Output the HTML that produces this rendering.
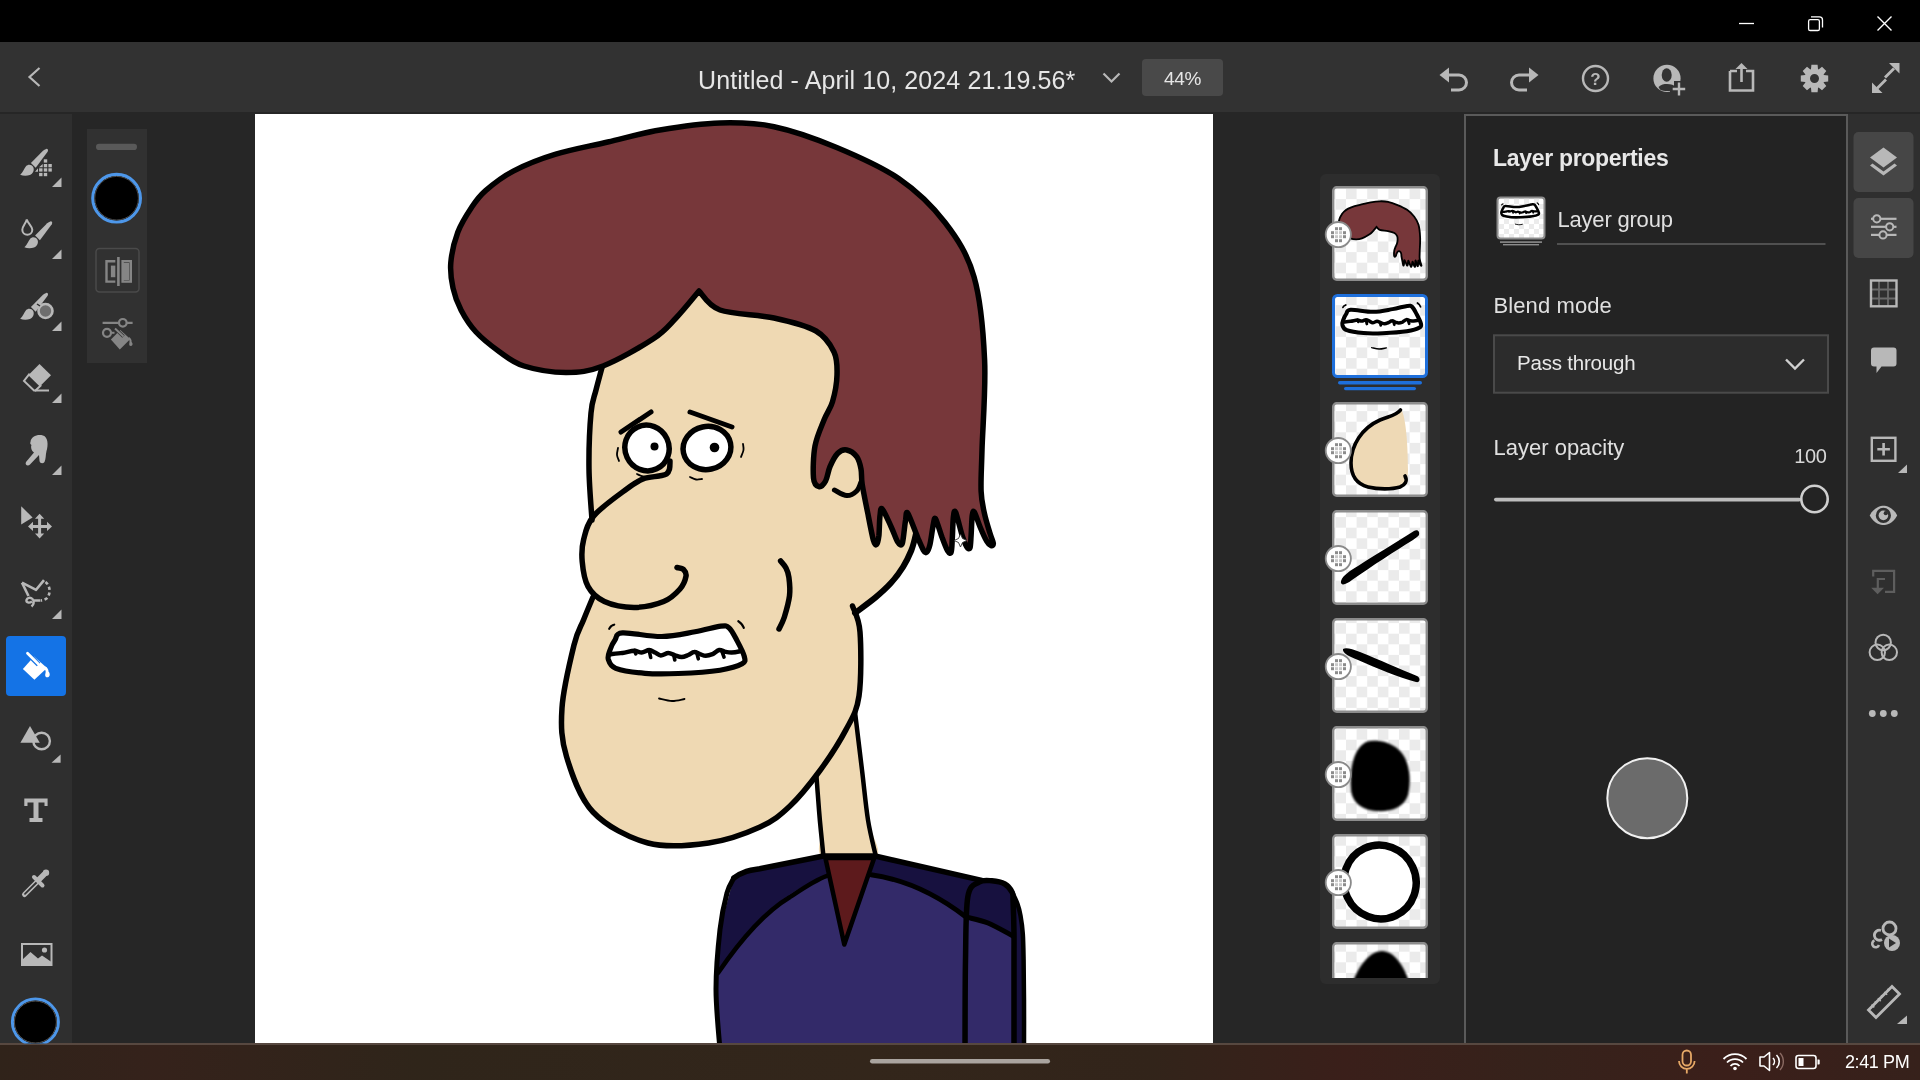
<!DOCTYPE html>
<html><head><meta charset="utf-8">
<style>
*{margin:0;padding:0;box-sizing:border-box}
html,body{width:1920px;height:1080px;overflow:hidden;background:#262626;font-family:"Liberation Sans",sans-serif;color:#ddd}
.abs{position:absolute}
svg.abs{will-change:transform}
#titlebar{left:0;top:0;width:1920px;height:42px;background:#000}
#topbar{left:0;top:42px;width:1920px;height:70px;background:#323232}
#topgap{left:0;top:112px;width:1920px;height:2px;background:#262626}
#lefttb{left:0;top:114px;width:72px;height:929px;background:#2f2f2f}
#sec{left:87px;top:129px;width:60px;height:234px;background:#313131}
#canvas{left:255px;top:114px;width:958px;height:929px;background:#fff}
#layers{left:1320px;top:174px;width:120px;height:810px;background:#2d2d2d;border-radius:6px}
#props{left:1464px;top:114px;width:384px;height:929px;background:#232323;border:2px solid #5a5a5a;border-bottom:none}
#righttb{left:1848px;top:114px;width:72px;height:929px;background:#2f2f2f}
#taskbar{left:0;top:1043px;width:1920px;height:37px;background:linear-gradient(90deg,#30231a 0%,#35221b 8%,#2f251a 22%,#33261b 45%,#32241a 60%,#3a1f1a 70%,#36221b 80%,#3b1f1a 90%,#36211b 100%);border-top:2px solid #574840}
</style></head><body>
<div id="titlebar" class="abs"></div>
<div id="topbar" class="abs"></div>
<div id="topgap" class="abs"></div>
<div id="lefttb" class="abs"></div>
<div id="sec" class="abs"></div>
<div id="canvas" class="abs"></div>
<!--DRAW-->
<svg class="abs" style="left:0;top:0" width="1920" height="1080" viewBox="0 0 1920 1080"><defs><clipPath id="cv"><rect x="255" y="114" width="958" height="929"/></clipPath></defs><g clip-path="url(#cv)"><path d="M816.0,770.0 C812.5,788.3 818.2,799.7 819.0,810.0 C819.8,820.3 820.2,824.2 821.0,832.0 C821.8,839.8 814.3,852.8 823.5,857.0 C832.7,861.2 868.6,863.2 876.0,857.0 C883.4,850.8 870.3,834.5 868.0,820.0 C865.7,805.5 864.2,788.0 862.0,770.0 C859.8,752.0 858.7,723.7 855.0,712.0 C851.3,700.3 846.5,690.3 840.0,700.0 C833.5,709.7 819.5,751.7 816.0,770.0 Z" fill="#efd9b3" />
<path d="M816.0,770.0 C816.5,776.7 818.2,799.7 819.0,810.0 C819.8,820.3 820.2,824.2 821.0,832.0 C821.8,839.8 823.1,852.8 823.5,857.0" fill="none" stroke="#000" stroke-width="4.5" stroke-linecap="round" stroke-linejoin="round" />
<path d="M855.0,712.0 C856.2,721.7 859.8,752.0 862.0,770.0 C864.2,788.0 865.7,805.5 868.0,820.0 C870.3,834.5 874.7,850.8 876.0,857.0" fill="none" stroke="#000" stroke-width="4.5" stroke-linecap="round" stroke-linejoin="round" />
<path d="M610.0,350.0 C594.0,361.7 606.3,353.3 604.0,360.0 C601.7,366.7 598.2,381.2 596.0,390.0 C593.8,398.8 592.2,399.8 591.0,413.0 C589.8,426.2 588.8,451.5 589.0,469.0 C589.2,486.5 593.3,503.2 592.0,518.0 C590.7,532.8 580.8,544.7 581.0,558.0 C581.2,571.3 592.5,587.7 593.0,598.0 C593.5,608.3 587.7,611.7 584.0,620.0 C580.3,628.3 574.7,633.3 571.0,648.0 C567.3,662.7 562.8,689.9 562.0,708.0 C561.2,726.1 561.3,739.2 566.5,756.5 C571.7,773.8 579.4,797.6 593.0,812.0 C606.6,826.4 628.7,837.8 648.0,843.0 C667.3,848.2 689.9,845.7 708.6,843.0 C727.3,840.3 746.4,833.2 760.0,827.0 C773.6,820.8 780.1,815.3 790.0,806.0 C799.9,796.7 810.3,783.6 819.6,771.0 C828.9,758.4 839.0,742.9 845.6,730.4 C852.2,717.9 856.6,712.4 859.0,696.0 C861.4,679.6 860.7,645.8 860.0,632.0 C859.3,618.2 852.4,618.8 855.0,613.0 C857.6,607.2 869.6,602.4 875.6,597.4 C881.6,592.4 886.3,588.2 890.9,583.1 C895.5,578.0 899.7,572.2 903.1,566.8 C906.5,561.4 909.2,555.6 911.3,550.5 C913.3,545.4 907.3,548.0 915.4,536.3 C923.5,524.5 952.6,511.1 960.0,480.0 C967.4,448.9 980.0,376.7 960.0,350.0 C940.0,323.3 883.3,330.0 840.0,320.0 C796.7,310.0 738.3,285.0 700.0,290.0 C661.7,295.0 626.0,338.3 610.0,350.0 Z" fill="#efd9b3" />
<path d="M604.0,360.0 C602.7,365.0 598.2,381.2 596.0,390.0 C593.8,398.8 592.2,399.8 591.0,413.0 C589.8,426.2 588.8,451.2 589.0,469.0 C589.2,486.8 591.5,511.5 592.0,520.0" fill="none" stroke="#000" stroke-width="5.5" stroke-linecap="round" stroke-linejoin="round" />
<path d="M593.0,597.0 C591.4,600.8 586.7,612.0 583.5,620.0 C580.3,628.0 577.6,630.3 574.0,645.0 C570.4,659.7 563.2,689.4 562.0,708.0 C560.8,726.6 561.3,739.2 566.5,756.5 C571.7,773.8 579.4,797.6 593.0,812.0 C606.6,826.4 628.7,837.8 648.0,843.0 C667.3,848.2 689.9,845.7 708.6,843.0 C727.3,840.3 746.4,833.2 760.0,827.0 C773.6,820.8 780.1,815.3 790.0,806.0 C799.9,796.7 810.3,783.6 819.6,771.0 C828.9,758.4 839.0,742.9 845.6,730.4 C852.2,717.9 856.6,712.4 859.0,696.0 C861.4,679.6 861.1,647.0 860.0,632.0 C858.9,617.0 853.8,610.3 852.5,606.0" fill="none" stroke="#000" stroke-width="5.5" stroke-linecap="round" stroke-linejoin="round" />
<path d="M855.0,613.0 C858.4,610.4 869.6,602.4 875.6,597.4 C881.6,592.4 886.3,588.2 890.9,583.1 C895.5,578.0 899.7,572.2 903.1,566.8 C906.5,561.4 909.2,555.6 911.3,550.5 C913.3,545.4 914.5,539.7 915.4,536.3 C916.3,532.9 916.3,531.0 916.5,530.0" fill="none" stroke="#000" stroke-width="6" stroke-linecap="round" stroke-linejoin="round" />
<path d="M670.0,461.0 C669.9,462.3 670.1,466.8 669.5,469.0 C668.9,471.2 668.2,472.8 666.5,474.0 C664.8,475.2 662.9,475.2 659.0,476.0 C655.1,476.8 648.4,476.8 643.0,479.0 C637.6,481.2 634.9,482.9 626.7,489.0 C618.5,495.1 601.2,507.2 594.0,515.6 C586.8,524.0 585.7,531.6 583.7,539.3 C581.7,546.9 581.5,553.6 582.2,561.5 C582.9,569.4 584.4,580.0 588.1,586.7 C591.8,593.4 596.8,598.0 604.4,601.5 C612.0,605.0 624.1,607.4 634.0,607.4 C643.9,607.4 656.0,604.6 663.7,601.5 C671.4,598.4 676.3,593.2 680.0,589.0 C683.7,584.8 685.4,579.5 686.0,576.3 C686.6,573.0 685.0,571.0 683.5,569.5 C682.0,568.0 678.1,567.8 677.0,567.5" fill="none" stroke="#000" stroke-width="5.5" stroke-linecap="round" stroke-linejoin="round" />
<path d="M780.6,561.0 C781.5,562.2 784.6,565.3 786.0,568.0 C787.4,570.7 788.3,572.8 788.9,577.4 C789.5,582.0 790.3,589.3 789.5,595.9 C788.7,602.5 786.0,611.7 784.3,617.2 C782.5,622.7 779.9,627.0 779.0,629.0" fill="none" stroke="#000" stroke-width="5.5" stroke-linecap="round" stroke-linejoin="round" />
<ellipse cx="647" cy="448" rx="22" ry="23" fill="#fff" stroke="#000" stroke-width="5.5" transform="rotate(-25 647 448)"/>
<ellipse cx="707" cy="448" rx="24" ry="21.5" fill="#fff" stroke="#000" stroke-width="5.5" transform="rotate(-12 707 448)"/>
<circle cx="654.5" cy="446.5" r="4" fill="#000"/>
<circle cx="714.5" cy="447.5" r="4.8" fill="#000"/>
<path d="M621,432 L651,412" fill="none" stroke="#000" stroke-width="5" stroke-linecap="round" stroke-linejoin="round" />
<path d="M690,412 L732,427" fill="none" stroke="#000" stroke-width="5" stroke-linecap="round" stroke-linejoin="round" />
<path d="M618.0,448.0 C617.8,449.2 616.8,452.8 617.0,455.0 C617.2,457.2 618.7,460.0 619.0,461.0" fill="none" stroke="#000" stroke-width="1.8" stroke-linecap="round" stroke-linejoin="round" />
<path d="M743.0,444.0 C743.1,445.0 743.8,447.8 743.5,450.0 C743.2,452.2 741.4,455.8 741.0,457.0" fill="none" stroke="#000" stroke-width="1.8" stroke-linecap="round" stroke-linejoin="round" />
<path d="M637.0,474.0 C638.0,474.4 640.8,476.1 643.0,476.5 C645.2,476.9 648.8,476.5 650.0,476.5" fill="none" stroke="#000" stroke-width="1.8" stroke-linecap="round" stroke-linejoin="round" />
<path d="M690.0,477.0 C691.0,477.4 694.0,479.2 696.0,479.5 C698.0,479.8 701.0,479.1 702.0,479.0" fill="none" stroke="#000" stroke-width="1.8" stroke-linecap="round" stroke-linejoin="round" />
<path d="M622.5,632.9 C630.3,632.3 649.6,636.7 661.7,636.5 C673.8,636.3 685.1,633.5 695.0,631.8 C704.9,630.1 715.1,626.9 720.8,626.2 C726.5,625.6 726.5,625.6 729.2,627.9 C731.8,630.2 734.2,635.3 736.7,640.0 C739.2,644.7 743.3,652.3 744.2,656.2 C745.1,660.2 746.1,661.4 742.1,663.8 C738.1,666.1 730.6,668.5 720.0,670.2 C709.4,671.8 690.8,673.0 678.3,673.5 C665.8,674.0 655.4,674.2 645.0,673.3 C634.6,672.5 621.9,670.7 615.8,668.3 C609.7,666.0 609.3,662.2 608.3,659.2 C607.4,656.1 608.9,653.2 610.0,650.0 C611.1,646.8 612.9,642.8 615.0,640.0 C617.1,637.2 614.7,633.5 622.5,632.9 Z" fill="#fff" stroke="#000" stroke-width="5.2" stroke-linecap="round" stroke-linejoin="round" />
<path d="M610.8,654.2 C612.8,654.0 618.6,653.5 622.5,652.9 C626.4,652.4 631.0,650.9 634.2,650.8 C637.4,650.8 639.2,652.6 641.7,652.5 C644.2,652.4 646.9,650.0 649.2,650.0 C651.4,650.0 653.1,651.6 655.0,652.5 C656.9,653.4 658.6,655.3 660.8,655.4 C663.1,655.5 666.0,652.9 668.3,652.9 C670.7,652.9 672.8,654.7 675.0,655.4 C677.2,656.1 679.4,657.2 681.7,657.1 C683.9,657.0 686.2,655.8 688.3,655.0 C690.4,654.2 692.2,652.2 694.2,652.1 C696.1,651.9 698.1,653.5 700.0,654.2 C701.9,654.8 703.8,655.8 705.8,655.8 C707.9,655.8 710.3,655.1 712.5,654.2 C714.7,653.2 717.1,650.4 719.2,650.0 C721.2,649.6 722.9,651.2 725.0,651.7 C727.1,652.1 729.2,652.6 731.7,652.5 C734.2,652.4 738.6,651.5 740.0,651.2" fill="none" stroke="#000" stroke-width="4.5" stroke-linecap="round" stroke-linejoin="round" />
<path d="M634.6,650.4 L635.8,653.8" fill="none" stroke="#000" stroke-width="3.6" stroke-linecap="round" stroke-linejoin="round" />
<path d="M649.3,650.8 L650.7,657.5" fill="none" stroke="#000" stroke-width="3.6" stroke-linecap="round" stroke-linejoin="round" />
<path d="M673.8,655.4 L674.8,660.0" fill="none" stroke="#000" stroke-width="3.6" stroke-linecap="round" stroke-linejoin="round" />
<path d="M696.8,652.9 L698.3,658.8" fill="none" stroke="#000" stroke-width="3.6" stroke-linecap="round" stroke-linejoin="round" />
<path d="M721.8,650.8 L724.0,657.1" fill="none" stroke="#000" stroke-width="3.6" stroke-linecap="round" stroke-linejoin="round" />
<path d="M609.2,628.8 C609.5,628.3 610.4,626.9 611.2,626.2 C612.1,625.6 613.7,624.9 614.2,624.6" fill="none" stroke="#000" stroke-width="2.2" stroke-linecap="round" stroke-linejoin="round" />
<path d="M738.3,621.2 C738.9,621.7 740.8,623.1 741.7,624.2 C742.6,625.3 743.4,627.3 743.8,627.9" fill="none" stroke="#000" stroke-width="2.2" stroke-linecap="round" stroke-linejoin="round" />
<path d="M659.0,698.5 C661.2,698.9 667.8,700.9 672.0,701.0 C676.2,701.1 682.4,699.3 684.5,699.0" fill="none" stroke="#000" stroke-width="1.8" stroke-linecap="round" stroke-linejoin="round" />
<path d="M699.0,291.0 C695.2,295.5 683.7,310.0 676.0,318.0 C668.3,326.0 665.2,331.0 653.0,339.0 C640.8,347.0 617.5,360.4 603.0,366.0 C588.5,371.6 579.2,372.5 566.0,372.5 C552.8,372.5 535.1,369.5 524.0,366.0 C512.9,362.5 507.4,357.4 499.4,351.7 C491.4,346.0 482.4,338.9 476.0,332.0 C469.6,325.1 464.8,317.3 461.0,310.0 C457.2,302.7 454.7,295.9 453.0,288.0 C451.3,280.1 450.0,272.1 450.8,262.8 C451.6,253.5 454.3,241.5 457.8,232.2 C461.3,222.9 467.1,214.1 471.7,207.2 C476.3,200.3 478.7,196.6 485.6,190.6 C492.5,184.6 501.7,177.1 513.3,171.1 C524.9,165.1 539.2,159.2 555.0,154.4 C570.8,149.6 590.3,146.1 607.8,142.0 C625.3,137.9 641.3,133.2 660.0,130.0 C678.7,126.8 701.0,123.5 720.0,123.0 C739.0,122.5 754.5,122.6 774.0,126.7 C793.5,130.8 815.9,138.8 836.7,147.5 C857.5,156.2 881.0,166.2 899.0,178.8 C917.0,191.2 932.5,206.2 945.0,222.5 C957.5,238.8 967.4,253.8 974.0,276.7 C980.6,299.6 983.3,331.1 984.6,360.0 C985.9,388.9 982.6,428.1 982.0,450.0 C981.4,471.9 980.7,480.6 981.1,491.1 C981.5,501.7 983.0,506.3 984.4,513.3 C985.9,520.4 988.5,528.3 990.0,533.3 C991.5,538.3 993.1,541.3 993.3,543.3 C993.5,545.4 992.2,545.9 991.1,545.6 C990.0,545.2 988.5,544.3 986.7,541.1 C984.8,538.0 982.0,531.5 980.0,526.7 C978.0,521.9 975.7,514.1 974.4,512.2 C973.1,510.4 972.8,511.7 972.2,515.6 C971.7,519.4 971.5,530.2 971.1,535.6 C970.7,540.9 970.7,545.9 970.0,547.8 C969.3,549.6 968.0,548.7 966.7,546.7 C965.4,544.6 964.1,541.3 962.2,535.6 C960.4,529.8 957.0,515.2 955.6,512.2 C954.1,509.3 953.9,513.1 953.3,517.8 C952.8,522.4 952.6,534.3 952.2,540.0 C951.9,545.7 951.9,550.4 951.1,552.2 C950.4,554.1 949.3,553.5 947.8,551.1 C946.3,548.7 944.3,543.1 942.2,537.8 C940.2,532.4 937.0,521.1 935.6,518.9 C934.1,516.7 934.3,520.2 933.3,524.4 C932.4,528.7 931.1,539.8 930.0,544.4 C928.9,549.1 927.8,551.3 926.7,552.2 C925.6,553.1 924.8,552.4 923.3,550.0 C921.9,547.6 920.4,543.9 917.8,537.8 C915.2,531.7 909.8,516.3 907.8,513.3 C905.7,510.4 906.3,515.9 905.6,520.0 C904.8,524.1 904.0,533.7 903.3,537.8 C902.7,541.9 902.7,543.7 901.8,544.4 C900.9,545.2 899.6,545.2 897.8,542.2 C896.0,539.3 893.7,532.2 891.1,526.7 C888.5,521.1 884.1,510.7 882.2,508.9 C880.4,507.0 880.6,511.1 880.0,515.6 C879.4,520.0 879.4,530.7 878.9,535.6 C878.3,540.4 877.6,543.7 876.7,544.4 C875.7,545.2 874.8,545.2 873.3,540.0 C871.9,534.8 869.6,522.6 867.8,513.3 C865.9,504.1 863.4,491.8 862.2,484.4 C861.1,477.1 861.9,473.6 861.0,469.0 C860.1,464.4 859.1,459.9 856.7,456.7 C854.3,453.5 849.9,450.6 846.7,450.0 C843.6,449.4 840.6,450.5 837.8,453.3 C835.0,456.1 832.0,462.1 830.0,466.7 C828.0,471.3 827.5,477.7 825.6,481.0 C823.8,484.3 820.9,487.2 818.9,486.7 C816.9,486.2 814.1,484.8 813.5,478.0 C812.9,471.2 813.2,455.7 815.0,446.0 C816.8,436.3 821.1,427.4 824.0,420.0 C826.9,412.6 830.3,409.2 832.5,401.7 C834.7,394.2 836.8,383.3 837.0,375.0 C837.2,366.7 837.5,359.3 834.0,352.0 C830.5,344.7 826.0,336.7 816.0,331.0 C806.0,325.3 790.0,321.5 774.0,318.0 C758.0,314.5 732.5,314.5 720.0,310.0 C707.5,305.5 702.5,294.2 699.0,291.0 Z" fill="#77373a" stroke="#000" stroke-width="5.5" stroke-linecap="round" stroke-linejoin="round" />
<path d="M834.4,490.0 C836.5,490.9 843.0,495.4 846.7,495.6 C850.4,495.8 854.3,493.3 856.7,491.0 C859.1,488.7 860.3,483.5 861.0,482.0" fill="none" stroke="#000" stroke-width="5" stroke-linecap="round" stroke-linejoin="round" />
<path d="M733.8,878 L759.7,868.8 L823.4,856 L875,856 L981.7,880.4 L992,880.8 L1005,884 L1013,893 L1020.5,915.6 L1022.8,934 L1024,1050 L720,1050 L716,989 L720,929.5 Z" fill="#332a69" />
<path d="M733.8,878 L759.7,868.8 L823.4,856 L827.4,875.8 C800,885 770,905 745,935 C735,948 725,960 718,973 L720,929.5 Z" fill="#17113f" />
<path d="M875,856 L981.7,880.4 L992,880.8 L1005,884 L1013,893 L1013.5,936 L988,923 L967.8,917.4 C945,900 910,882 871,874.8 Z" fill="#17113f" />
<path d="M1012,890 L1020.5,915.6 L1022.8,934 L1024,1050 L1014,1050 L1013.5,900 Z" fill="#17113f" />
<path d="M825.4,857.9 L874.2,857.9 L844.3,944.5 Z" fill="#5d1a1c" stroke="#000" stroke-width="4.5" stroke-linecap="round" stroke-linejoin="round" />
<path d="M720.0,1050.0 C719.3,1039.8 716.0,1009.1 716.0,989.0 C716.0,968.9 718.2,945.5 720.0,929.5 C721.8,913.5 724.7,901.6 727.0,893.0 C729.3,884.4 732.7,880.5 733.8,878.0" fill="none" stroke="#000" stroke-width="5" stroke-linecap="round" stroke-linejoin="round" />
<path d="M733.8,878 C745,870 752,870 759.7,868.8 L823.4,856 L875,856 L981.7,880.4" fill="none" stroke="#000" stroke-width="5.5" stroke-linecap="round" stroke-linejoin="round" />
<path d="M1012.0,892.0 C1012.9,894.0 1016.1,900.1 1017.5,904.0 C1018.9,907.9 1019.6,910.6 1020.5,915.6 C1021.4,920.6 1022.3,926.6 1022.8,934.0 C1023.3,941.4 1023.4,949.0 1023.6,960.0 C1023.8,971.0 1023.9,985.0 1024.0,1000.0 C1024.1,1015.0 1024.0,1041.7 1024.0,1050.0" fill="none" stroke="#000" stroke-width="4.5" stroke-linecap="round" stroke-linejoin="round" />
<path d="M965.0,1050.0 C965.1,1035.0 965.0,985.5 965.5,960.0 C966.0,934.5 965.6,910.0 967.8,897.0 C970.0,884.0 974.9,884.9 978.9,882.2 C982.9,879.5 987.6,880.5 991.9,880.8 C996.2,881.1 1001.4,882.1 1004.8,884.0 C1008.2,885.9 1010.8,889.4 1012.2,892.4 C1013.6,895.4 1012.8,894.8 1013.1,901.7 C1013.4,908.6 1013.9,924.3 1014.0,934.0 C1014.1,943.7 1014.0,940.7 1014.0,960.0 C1014.0,979.3 1014.0,1035.0 1014.0,1050.0" fill="none" stroke="#000" stroke-width="5.5" stroke-linecap="round" stroke-linejoin="round" />
<path d="M967.8,917.4 C971.2,918.3 980.5,919.9 988.0,923.0 C995.5,926.1 1008.8,933.8 1013.0,936.0" fill="none" stroke="#000" stroke-width="5" stroke-linecap="round" stroke-linejoin="round" />
<path d="M718,973 C735,948 760,915 790,897 C805,887 815,880 827,875.8" fill="none" stroke="#000" stroke-width="4.5" stroke-linecap="round" stroke-linejoin="round" />
<path d="M871,874.8 C910,880 940,897 966,917" fill="none" stroke="#000" stroke-width="5" stroke-linecap="round" stroke-linejoin="round" />
<path d="M960.5,534 L962.5,538.5 L967,540.5 L962.5,542.5 L960.5,547 L958.5,542.5 L954,540.5 L958.5,538.5 Z" fill="#fff" stroke="#333" stroke-width="0.9"/></g></svg>
<!--/DRAW-->
<div id="layers" class="abs"></div>
<div id="props" class="abs"></div>
<div id="righttb" class="abs"></div>
<div id="taskbar" class="abs"></div>
<!--UIL-->
<svg class="abs" style="left:0;top:0" width="1920" height="1080" viewBox="0 0 1920 1080"><g transform="translate(0,0)"><path d="M30.9,163.1 L35.7,167.7 L47.6,151.8 C48.6,150.2 47.8,148.6 46.2,148.9 C45,149.2 44,150 43,150.8 Z" fill="#b8b8b8"/><path d="M20.2,174.8 C23,172.5 24,168.5 26,166.3 C28,164 31.5,164.3 33.2,167 C34.7,170 33,173.8 29.8,175 C26.8,176.2 22.8,176 20.2,174.8 Z" fill="#b8b8b8"/></g>
<rect x="43.8" y="159.3" width="3.4" height="3.3" fill="#b8b8b8"/>
<rect x="43.8" y="164" width="3.4" height="3.3" fill="#b8b8b8"/>
<rect x="48.4" y="164" width="3.4" height="3.3" fill="#b8b8b8"/>
<rect x="39.1" y="168.3" width="3.4" height="3.3" fill="#b8b8b8"/>
<rect x="43.8" y="168.3" width="3.4" height="3.3" fill="#b8b8b8"/>
<rect x="48.4" y="168.3" width="3.4" height="3.3" fill="#b8b8b8"/>
<rect x="39.1" y="172.9" width="3.4" height="3.3" fill="#b8b8b8"/>
<rect x="43.8" y="172.9" width="3.4" height="3.3" fill="#b8b8b8"/>
<path d="M35,171.7 L38,168.3 V171.7 Z M39.1,167.2 L42.7,164 V167.2 Z" fill="#b8b8b8"/>
<path d="M52,187 H61.5 V177.5 Z" fill="#b8b8b8"/>
<path d="M26.8,219.5 C27.8,223.5 32.3,226 32.3,229.8 A5,5 0 0 1 22.3,229.8 C22.3,226 25.8,223.5 26.8,219.5 Z" fill="none" stroke="#b8b8b8" stroke-width="2"/>
<g transform="translate(4.2,72.5)"><path d="M30.9,163.1 L35.7,167.7 L47.6,151.8 C48.6,150.2 47.8,148.6 46.2,148.9 C45,149.2 44,150 43,150.8 Z" fill="#b8b8b8"/><path d="M20.2,174.8 C23,172.5 24,168.5 26,166.3 C28,164 31.5,164.3 33.2,167 C34.7,170 33,173.8 29.8,175 C26.8,176.2 22.8,176 20.2,174.8 Z" fill="#b8b8b8"/></g>
<path d="M52,259 H61.5 V249.5 Z" fill="#b8b8b8"/>
<g transform="translate(0,144)"><path d="M30.9,163.1 L35.7,167.7 L47.6,151.8 C48.6,150.2 47.8,148.6 46.2,148.9 C45,149.2 44,150 43,150.8 Z" fill="#b8b8b8"/><path d="M20.2,174.8 C23,172.5 24,168.5 26,166.3 C28,164 31.5,164.3 33.2,167 C34.7,170 33,173.8 29.8,175 C26.8,176.2 22.8,176 20.2,174.8 Z" fill="#b8b8b8"/></g>
<circle cx="45.5" cy="311" r="7" fill="#6e6e6e" stroke="#b8b8b8" stroke-width="2.6"/>
<path d="M37,304 L40,306" stroke="#2f2f2f" stroke-width="1.5"/>
<path d="M52,331 H61.5 V321.5 Z" fill="#b8b8b8"/>
<path d="M39.5,364 L51,375.2 L40.5,385.8 L29,374.5 Z" fill="#b8b8b8"/>
<path d="M29,374.5 L40.5,385.8 L35.5,390.5 H34 L24,381 Z" fill="none" stroke="#b8b8b8" stroke-width="2"/>
<path d="M35,390.5 H49" stroke="#b8b8b8" stroke-width="2"/>
<path d="M52,403 H61.5 V393.5 Z" fill="#b8b8b8"/>
<path d="M30.5,442 C31,436 38,434 43,435.5 C48,437 48.5,445 46.5,451 C45.5,455 46,459 44.5,462 C43,464 40,463.5 39.5,461 L39,455 L30,464.5 C28,466.5 24.5,465 26,462 L34,452.5 C31.5,451 30.5,447 31.5,445 C30,444 30,443 30.5,442 Z" fill="#b8b8b8"/>
<path d="M52,475 H61.5 V465.5 Z" fill="#b8b8b8"/>
<path d="M21.2,506.2 L32.6,517.6 L21.2,524.6 Z" fill="#b8b8b8"/>
<path d="M31,526.4 H49 M39.6,517 V535.5" stroke="#b8b8b8" stroke-width="3"/>
<path d="M28,526.4 L33,521.8 V531 Z M52,526.4 L47,521.8 V531 Z M39.6,513.8 L35,518.8 H44.2 Z M39.6,538.5 L35,533.5 H44.2 Z" fill="#b8b8b8"/>
<path d="M22,582.7 L36.1,589.8 L44,580.1" fill="none" stroke="#b8b8b8" stroke-width="2.6" stroke-linejoin="round"/>
<path d="M22,582.7 L28.5,596" fill="none" stroke="#b8b8b8" stroke-width="2.6"/>
<path d="M45.5,582 C50.5,586 51,594 46.5,598.5 C44.5,600 42.5,600.5 40.5,600.5" fill="none" stroke="#b8b8b8" stroke-width="2.6" stroke-dasharray="3.2 2.6"/>
<path d="M40,600.5 H34 M31.5,606.5 C34,604.5 34.5,601 32.5,599 C30.5,597 27,597.5 26.5,600 C26,602.5 29,603.5 32,601.5" fill="none" stroke="#b8b8b8" stroke-width="2.4"/>
<path d="M52,619 H61.5 V609.5 Z" fill="#b8b8b8"/>
<rect x="6" y="636" width="60" height="60" rx="4" fill="#1473e6"/>
<path d="M22.9,669 L34,656.5 L47,668 L34.4,679.8 Z" fill="#fff"/>
<path d="M27.5,653.5 L38.5,664.5" stroke="#1473e6" stroke-width="5"/>
<path d="M27.5,653.2 L38.3,664" stroke="#fff" stroke-width="2.8" stroke-linecap="round"/>
<path d="M45.5,666.5 C47.5,667.5 48.5,669.5 48.5,671.5 C50,673 50.2,675.5 48.8,676.8 C47.4,678 45.4,677.2 45.2,675.4 C45,673.8 46,672.5 45.6,671 C45.2,669.6 44.5,668.5 43.5,668 Z" fill="#fff"/>
<circle cx="41.6" cy="741" r="8.3" fill="none" stroke="#b8b8b8" stroke-width="2.4"/>
<path d="M20.4,742.8 L30,726 L39.8,742.8 Z" fill="#b8b8b8"/>
<path d="M51.5,762.7 H60.6 V754.4 Z" fill="#b8b8b8"/>
<path d="M24.3,798.5 H47.6 V806 H44.5 V802.5 H38.5 V818 H42.5 V822 H29.5 V818 H33.5 V802.5 H27.5 V806 H24.3 Z" fill="#b8b8b8"/>
<path d="M24.5,894.5 L38,881" stroke="#b8b8b8" stroke-width="5" stroke-linecap="round"/>
<path d="M25,893.8 L37.5,881.5" stroke="#2f2f2f" stroke-width="1.8" stroke-linecap="round"/>
<path d="M34,877 L42.5,885.5" stroke="#b8b8b8" stroke-width="4" stroke-linecap="round"/>
<path d="M38.5,880 L44,874.5" stroke="#b8b8b8" stroke-width="5.5" stroke-linecap="round"/>
<circle cx="46" cy="872.8" r="3.2" fill="#b8b8b8"/>
<rect x="22" y="944" width="29.5" height="21" fill="none" stroke="#b8b8b8" stroke-width="2"/>
<path d="M22,960 L30.5,952 L38,958.5 L42,955.5 L51.5,962 V965 H22 Z" fill="#b8b8b8"/>
<circle cx="44.5" cy="950" r="2.6" fill="#b8b8b8"/>
<clipPath id="ccb"><rect x="0" y="990" width="72" height="53.5"/></clipPath><g clip-path="url(#ccb)"><circle cx="35.4" cy="1022" r="23" fill="#000" stroke="#4d97ea" stroke-width="3"/><circle cx="35.4" cy="1022" r="21" fill="none" stroke="#555" stroke-width="1"/></g>
<rect x="96" y="143.7" width="41" height="6.3" rx="3.1" fill="#595959"/>
<circle cx="116.6" cy="198.2" r="23.8" fill="#000" stroke="#4d97ea" stroke-width="3.2"/>
<circle cx="116.6" cy="198.2" r="21.8" fill="none" stroke="#4a4a4a" stroke-width="1"/>
<rect x="96" y="248.5" width="43" height="43.5" rx="3.5" fill="none" stroke="#4a4a4a" stroke-width="1.5"/>
<path d="M118.4,257 V286" stroke="#858585" stroke-width="2.6"/>
<path d="M115.3,261.2 H106.5 V281.6 H115.3" fill="none" stroke="#858585" stroke-width="2.4"/>
<rect x="110.9" y="265.6" width="4.4" height="11.6" fill="#858585"/>
<rect x="122.6" y="261.2" width="8.2" height="20.4" fill="none" stroke="#858585" stroke-width="2.4"/>
<rect x="122.6" y="263" width="6.6" height="17" fill="#858585"/>
<path d="M102.6,322.8 H119 M126.6,322.8 H132.6" stroke="#858585" stroke-width="2.2"/>
<circle cx="122.8" cy="322.8" r="3.8" fill="none" stroke="#858585" stroke-width="2.2"/>
<circle cx="107" cy="332.8" r="4" fill="none" stroke="#858585" stroke-width="2.2"/>
<path d="M111,332.8 H114.5" stroke="#858585" stroke-width="2"/>
<path d="M110.9,339.4 L120.3,330 L130.3,339 L119.8,349.4 Z" fill="#858585"/>
<path d="M114.8,328.2 L123.5,336.5" stroke="#313131" stroke-width="3.4"/>
<path d="M115,328.5 L123.5,336.5" stroke="#858585" stroke-width="2"/>
<path d="M129,337 C131,338 131.8,340 131.6,342 C132.8,343 133,345 131.6,345.8 C130.2,346.5 129,345.5 129.2,344 C129.4,342.5 130,341 129,339.5 Z" fill="#858585"/></svg>
<!--/UIL-->
<!--UIR-->
<svg class="abs" style="left:0;top:0" width="1920" height="1080" viewBox="0 0 1920 1080"><defs><pattern id="chk" x="1335.4" y="188.5" width="21.2" height="21.2" patternUnits="userSpaceOnUse"><rect width="21.2" height="21.2" fill="#fff"/><rect x="10.6" width="10.6" height="10.6" fill="#ebebeb"/><rect y="10.6" width="10.6" height="10.6" fill="#ebebeb"/></pattern><clipPath id="th0"><rect x="1335" y="188.5" width="90.5" height="90"/></clipPath><clipPath id="th1"><rect x="1335" y="296.5" width="90.5" height="79"/></clipPath><clipPath id="th2"><rect x="1335" y="404.5" width="90.5" height="90"/></clipPath><clipPath id="th3"><rect x="1335" y="512.5" width="90.5" height="90"/></clipPath><clipPath id="th4"><rect x="1335" y="620.5" width="90.5" height="90"/></clipPath><clipPath id="th5"><rect x="1335" y="728.5" width="90.5" height="90"/></clipPath><clipPath id="th6"><rect x="1335" y="836.5" width="90.5" height="90"/></clipPath><clipPath id="th7"><rect x="1335" y="944.5" width="90.5" height="75"/></clipPath><clipPath id="p8"><rect x="1320" y="940" width="120" height="38"/></clipPath><filter id="blr" x="-20%" y="-20%" width="140%" height="140%"><feGaussianBlur stdDeviation="1.1"/></filter><pattern id="chk2" x="1499" y="199" width="10" height="10" patternUnits="userSpaceOnUse"><rect width="10" height="10" fill="#fff"/><rect x="5" width="5" height="5" fill="#ebebeb"/><rect y="5" width="5" height="5" fill="#ebebeb"/></pattern><clipPath id="sth"><rect x="1499" y="199" width="44" height="38"/></clipPath></defs><rect x="1333.2" y="187.2" width="93.6" height="92.6" rx="3.5" fill="url(#chk)" stroke="#8c8c8c" stroke-width="2.4"/>
<rect x="1333.5" y="295.5" width="93" height="81" rx="4" fill="url(#chk)" stroke="#1e6fdb" stroke-width="3"/>
<rect x="1338" y="381" width="84" height="3.4" rx="1.7" fill="#1e6fdb"/>
<rect x="1344" y="387" width="72" height="3.2" rx="1.6" fill="#1e6fdb"/>
<rect x="1333.2" y="403.2" width="93.6" height="92.6" rx="3.5" fill="url(#chk)" stroke="#8c8c8c" stroke-width="2.4"/>
<rect x="1333.2" y="511.2" width="93.6" height="92.6" rx="3.5" fill="url(#chk)" stroke="#8c8c8c" stroke-width="2.4"/>
<rect x="1333.2" y="619.2" width="93.6" height="92.6" rx="3.5" fill="url(#chk)" stroke="#8c8c8c" stroke-width="2.4"/>
<rect x="1333.2" y="727.2" width="93.6" height="92.6" rx="3.5" fill="url(#chk)" stroke="#8c8c8c" stroke-width="2.4"/>
<rect x="1333.2" y="835.2" width="93.6" height="92.6" rx="3.5" fill="url(#chk)" stroke="#8c8c8c" stroke-width="2.4"/>
<g clip-path="url(#p8)"><rect x="1333.2" y="943.2" width="93.6" height="77.6" rx="3.5" fill="url(#chk)" stroke="#8c8c8c" stroke-width="2.4"/></g>
<g clip-path="url(#th0)"><g transform="translate(1338.3,201) scale(0.1525) translate(-448,-121)"><path d="M699.0,291.0 C695.2,295.5 683.7,310.0 676.0,318.0 C668.3,326.0 665.2,331.0 653.0,339.0 C640.8,347.0 617.5,360.4 603.0,366.0 C588.5,371.6 579.2,372.5 566.0,372.5 C552.8,372.5 535.1,369.5 524.0,366.0 C512.9,362.5 507.4,357.4 499.4,351.7 C491.4,346.0 482.4,338.9 476.0,332.0 C469.6,325.1 464.8,317.3 461.0,310.0 C457.2,302.7 454.7,295.9 453.0,288.0 C451.3,280.1 450.0,272.1 450.8,262.8 C451.6,253.5 454.3,241.5 457.8,232.2 C461.3,222.9 467.1,214.1 471.7,207.2 C476.3,200.3 478.7,196.6 485.6,190.6 C492.5,184.6 501.7,177.1 513.3,171.1 C524.9,165.1 539.2,159.2 555.0,154.4 C570.8,149.6 590.3,146.1 607.8,142.0 C625.3,137.9 641.3,133.2 660.0,130.0 C678.7,126.8 701.0,123.5 720.0,123.0 C739.0,122.5 754.5,122.6 774.0,126.7 C793.5,130.8 815.9,138.8 836.7,147.5 C857.5,156.2 881.0,166.2 899.0,178.8 C917.0,191.2 932.5,206.2 945.0,222.5 C957.5,238.8 967.4,253.8 974.0,276.7 C980.6,299.6 983.3,331.1 984.6,360.0 C985.9,388.9 982.6,428.1 982.0,450.0 C981.4,471.9 980.7,480.6 981.1,491.1 C981.5,501.7 983.0,506.3 984.4,513.3 C985.9,520.4 988.5,528.3 990.0,533.3 C991.5,538.3 993.1,541.3 993.3,543.3 C993.5,545.4 992.2,545.9 991.1,545.6 C990.0,545.2 988.5,544.3 986.7,541.1 C984.8,538.0 982.0,531.5 980.0,526.7 C978.0,521.9 975.7,514.1 974.4,512.2 C973.1,510.4 972.8,511.7 972.2,515.6 C971.7,519.4 971.5,530.2 971.1,535.6 C970.7,540.9 970.7,545.9 970.0,547.8 C969.3,549.6 968.0,548.7 966.7,546.7 C965.4,544.6 964.1,541.3 962.2,535.6 C960.4,529.8 957.0,515.2 955.6,512.2 C954.1,509.3 953.9,513.1 953.3,517.8 C952.8,522.4 952.6,534.3 952.2,540.0 C951.9,545.7 951.9,550.4 951.1,552.2 C950.4,554.1 949.3,553.5 947.8,551.1 C946.3,548.7 944.3,543.1 942.2,537.8 C940.2,532.4 937.0,521.1 935.6,518.9 C934.1,516.7 934.3,520.2 933.3,524.4 C932.4,528.7 931.1,539.8 930.0,544.4 C928.9,549.1 927.8,551.3 926.7,552.2 C925.6,553.1 924.8,552.4 923.3,550.0 C921.9,547.6 920.4,543.9 917.8,537.8 C915.2,531.7 909.8,516.3 907.8,513.3 C905.7,510.4 906.3,515.9 905.6,520.0 C904.8,524.1 904.0,533.7 903.3,537.8 C902.7,541.9 902.7,543.7 901.8,544.4 C900.9,545.2 899.6,545.2 897.8,542.2 C896.0,539.3 893.7,532.2 891.1,526.7 C888.5,521.1 884.1,510.7 882.2,508.9 C880.4,507.0 880.6,511.1 880.0,515.6 C879.4,520.0 879.4,530.7 878.9,535.6 C878.3,540.4 877.6,543.7 876.7,544.4 C875.7,545.2 874.8,545.2 873.3,540.0 C871.9,534.8 869.6,522.6 867.8,513.3 C865.9,504.1 863.4,491.8 862.2,484.4 C861.1,477.1 861.9,473.6 861.0,469.0 C860.1,464.4 859.1,459.9 856.7,456.7 C854.3,453.5 849.9,450.6 846.7,450.0 C843.6,449.4 840.6,450.5 837.8,453.3 C835.0,456.1 832.0,462.1 830.0,466.7 C828.0,471.3 827.5,477.7 825.6,481.0 C823.8,484.3 820.9,487.2 818.9,486.7 C816.9,486.2 814.1,484.8 813.5,478.0 C812.9,471.2 813.2,455.7 815.0,446.0 C816.8,436.3 821.1,427.4 824.0,420.0 C826.9,412.6 830.3,409.2 832.5,401.7 C834.7,394.2 836.8,383.3 837.0,375.0 C837.2,366.7 837.5,359.3 834.0,352.0 C830.5,344.7 826.0,336.7 816.0,331.0 C806.0,325.3 790.0,321.5 774.0,318.0 C758.0,314.5 732.5,314.5 720.0,310.0 C707.5,305.5 702.5,294.2 699.0,291.0 Z" fill="#77373a" stroke="#000" stroke-width="12"/></g></g>
<g clip-path="url(#th1)"><g transform="translate(1340.5,303.3) scale(0.577) translate(-605,-621.7)"><path d="M622.5,632.9 C630.3,632.3 649.6,636.7 661.7,636.5 C673.8,636.3 685.1,633.5 695.0,631.8 C704.9,630.1 715.1,626.9 720.8,626.2 C726.5,625.6 726.5,625.6 729.2,627.9 C731.8,630.2 734.2,635.3 736.7,640.0 C739.2,644.7 743.3,652.3 744.2,656.2 C745.1,660.2 746.1,661.4 742.1,663.8 C738.1,666.1 730.6,668.5 720.0,670.2 C709.4,671.8 690.8,673.0 678.3,673.5 C665.8,674.0 655.4,674.2 645.0,673.3 C634.6,672.5 621.9,670.7 615.8,668.3 C609.7,666.0 609.3,662.2 608.3,659.2 C607.4,656.1 608.9,653.2 610.0,650.0 C611.1,646.8 612.9,642.8 615.0,640.0 C617.1,637.2 614.7,633.5 622.5,632.9 Z" fill="#fff" stroke="#000" stroke-width="7.02" stroke-linecap="round" stroke-linejoin="round" /><path d="M610.8,654.2 C612.8,654.0 618.6,653.5 622.5,652.9 C626.4,652.4 631.0,650.9 634.2,650.8 C637.4,650.8 639.2,652.6 641.7,652.5 C644.2,652.4 646.9,650.0 649.2,650.0 C651.4,650.0 653.1,651.6 655.0,652.5 C656.9,653.4 658.6,655.3 660.8,655.4 C663.1,655.5 666.0,652.9 668.3,652.9 C670.7,652.9 672.8,654.7 675.0,655.4 C677.2,656.1 679.4,657.2 681.7,657.1 C683.9,657.0 686.2,655.8 688.3,655.0 C690.4,654.2 692.2,652.2 694.2,652.1 C696.1,651.9 698.1,653.5 700.0,654.2 C701.9,654.8 703.8,655.8 705.8,655.8 C707.9,655.8 710.3,655.1 712.5,654.2 C714.7,653.2 717.1,650.4 719.2,650.0 C721.2,649.6 722.9,651.2 725.0,651.7 C727.1,652.1 729.2,652.6 731.7,652.5 C734.2,652.4 738.6,651.5 740.0,651.2" fill="none" stroke="#000" stroke-width="6.08" stroke-linecap="round" stroke-linejoin="round" /><path d="M634.6,650.4 L635.8,653.8" fill="none" stroke="#000" stroke-width="4.86" stroke-linecap="round" stroke-linejoin="round" /><path d="M649.3,650.8 L650.7,657.5" fill="none" stroke="#000" stroke-width="4.86" stroke-linecap="round" stroke-linejoin="round" /><path d="M673.8,655.4 L674.8,660.0" fill="none" stroke="#000" stroke-width="4.86" stroke-linecap="round" stroke-linejoin="round" /><path d="M696.8,652.9 L698.3,658.8" fill="none" stroke="#000" stroke-width="4.86" stroke-linecap="round" stroke-linejoin="round" /><path d="M721.8,650.8 L724.0,657.1" fill="none" stroke="#000" stroke-width="4.86" stroke-linecap="round" stroke-linejoin="round" /><path d="M609.2,628.8 C609.5,628.3 610.4,626.9 611.2,626.2 C612.1,625.6 613.7,624.9 614.2,624.6" fill="none" stroke="#000" stroke-width="2.97" stroke-linecap="round" stroke-linejoin="round" /><path d="M738.3,621.2 C738.9,621.7 740.8,623.1 741.7,624.2 C742.6,625.3 743.4,627.3 743.8,627.9" fill="none" stroke="#000" stroke-width="2.97" stroke-linecap="round" stroke-linejoin="round" /><path d="M659.0,698.5 C661.2,698.9 667.8,700.9 672.0,701.0 C676.2,701.1 682.4,699.3 684.5,699.0" fill="none" stroke="#000" stroke-width="2.43" stroke-linecap="round" stroke-linejoin="round" /></g></g>
<g clip-path="url(#th2)"><path d="M1400.5,409 C1405,412 1408,440 1408,470 C1408,478 1406,484 1400,487 C1392,490 1378,490 1368,488 C1356,485 1350,476 1350,463 C1350,445 1362,427 1380,419 C1390,415 1396,414 1400.5,409 Z" fill="#eed9b5"/>
<path d="M1400.5,410 C1397,415 1390,416 1380,420 C1362,428 1351,445 1351,463 C1351,476 1357,484 1368,487 C1378,489.5 1392,489.5 1400,487 C1405,485 1408,481 1405,476" fill="none" stroke="#000" stroke-width="3.6" stroke-linecap="round"/></g>
<g clip-path="url(#th3)"><path d="M1341,581 C1343,575 1350,571 1358,566 C1375,555 1395,543 1414,531 C1417,529 1420,531 1419,535 C1418,537 1415,538 1413,540 C1395,551 1372,566 1352,580 C1347,584 1340,587 1341,581 Z" fill="#000"/></g>
<g clip-path="url(#th4)"><path d="M1343,649 C1346,647 1352,649 1360,652 C1380,660 1400,669 1417,676 C1421,678 1420,683 1416,682 C1398,677 1378,669 1358,660 C1350,657 1342,653 1343,649 Z" fill="#000"/></g>
<g clip-path="url(#th5)"><path d="M1366,742 C1380,738 1398,744 1405,758 C1410,768 1411,783 1408,795 C1404,808 1390,812 1376,811 C1362,810 1351,802 1351,788 C1350,772 1352,750 1366,742 Z" fill="#000" filter="url(#blr)"/></g>
<g clip-path="url(#th6)"><ellipse cx="1380" cy="882" rx="36" ry="37" transform="rotate(-25 1380 882)" fill="#fff" stroke="#000" stroke-width="7.5"/></g>
<g clip-path="url(#p8)"><path d="M1350,990 C1356,970 1368,951 1382,951 C1396,951 1406,970 1412,990 Z" fill="#000" filter="url(#blr)"/></g>
<circle cx="1338.3" cy="234.6" r="12.6" fill="#fff" stroke="#8a8a8a" stroke-width="1.8"/>
<rect x="1335" y="227.2" width="3" height="3" fill="#8c8c8c"/>
<rect x="1339" y="227.2" width="3" height="3" fill="#8c8c8c"/>
<rect x="1331" y="231.2" width="3" height="3" fill="#8c8c8c"/>
<rect x="1335" y="231.2" width="3" height="3" fill="#c9c9c9"/>
<rect x="1339" y="231.2" width="3" height="3" fill="#c9c9c9"/>
<rect x="1343" y="231.2" width="3" height="3" fill="#8c8c8c"/>
<rect x="1331" y="235.2" width="3" height="3" fill="#8c8c8c"/>
<rect x="1335" y="235.2" width="3" height="3" fill="#c9c9c9"/>
<rect x="1339" y="235.2" width="3" height="3" fill="#c9c9c9"/>
<rect x="1343" y="235.2" width="3" height="3" fill="#8c8c8c"/>
<rect x="1335" y="239.2" width="3" height="3" fill="#8c8c8c"/>
<rect x="1339" y="239.2" width="3" height="3" fill="#8c8c8c"/>
<circle cx="1338.3" cy="450.6" r="12.6" fill="#fff" stroke="#8a8a8a" stroke-width="1.8"/>
<rect x="1335" y="443.2" width="3" height="3" fill="#8c8c8c"/>
<rect x="1339" y="443.2" width="3" height="3" fill="#8c8c8c"/>
<rect x="1331" y="447.2" width="3" height="3" fill="#8c8c8c"/>
<rect x="1335" y="447.2" width="3" height="3" fill="#c9c9c9"/>
<rect x="1339" y="447.2" width="3" height="3" fill="#c9c9c9"/>
<rect x="1343" y="447.2" width="3" height="3" fill="#8c8c8c"/>
<rect x="1331" y="451.2" width="3" height="3" fill="#8c8c8c"/>
<rect x="1335" y="451.2" width="3" height="3" fill="#c9c9c9"/>
<rect x="1339" y="451.2" width="3" height="3" fill="#c9c9c9"/>
<rect x="1343" y="451.2" width="3" height="3" fill="#8c8c8c"/>
<rect x="1335" y="455.2" width="3" height="3" fill="#8c8c8c"/>
<rect x="1339" y="455.2" width="3" height="3" fill="#8c8c8c"/>
<circle cx="1338.3" cy="558.6" r="12.6" fill="#fff" stroke="#8a8a8a" stroke-width="1.8"/>
<rect x="1335" y="551.2" width="3" height="3" fill="#8c8c8c"/>
<rect x="1339" y="551.2" width="3" height="3" fill="#8c8c8c"/>
<rect x="1331" y="555.2" width="3" height="3" fill="#8c8c8c"/>
<rect x="1335" y="555.2" width="3" height="3" fill="#c9c9c9"/>
<rect x="1339" y="555.2" width="3" height="3" fill="#c9c9c9"/>
<rect x="1343" y="555.2" width="3" height="3" fill="#8c8c8c"/>
<rect x="1331" y="559.2" width="3" height="3" fill="#8c8c8c"/>
<rect x="1335" y="559.2" width="3" height="3" fill="#c9c9c9"/>
<rect x="1339" y="559.2" width="3" height="3" fill="#c9c9c9"/>
<rect x="1343" y="559.2" width="3" height="3" fill="#8c8c8c"/>
<rect x="1335" y="563.2" width="3" height="3" fill="#8c8c8c"/>
<rect x="1339" y="563.2" width="3" height="3" fill="#8c8c8c"/>
<circle cx="1338.3" cy="666.6" r="12.6" fill="#fff" stroke="#8a8a8a" stroke-width="1.8"/>
<rect x="1335" y="659.2" width="3" height="3" fill="#8c8c8c"/>
<rect x="1339" y="659.2" width="3" height="3" fill="#8c8c8c"/>
<rect x="1331" y="663.2" width="3" height="3" fill="#8c8c8c"/>
<rect x="1335" y="663.2" width="3" height="3" fill="#c9c9c9"/>
<rect x="1339" y="663.2" width="3" height="3" fill="#c9c9c9"/>
<rect x="1343" y="663.2" width="3" height="3" fill="#8c8c8c"/>
<rect x="1331" y="667.2" width="3" height="3" fill="#8c8c8c"/>
<rect x="1335" y="667.2" width="3" height="3" fill="#c9c9c9"/>
<rect x="1339" y="667.2" width="3" height="3" fill="#c9c9c9"/>
<rect x="1343" y="667.2" width="3" height="3" fill="#8c8c8c"/>
<rect x="1335" y="671.2" width="3" height="3" fill="#8c8c8c"/>
<rect x="1339" y="671.2" width="3" height="3" fill="#8c8c8c"/>
<circle cx="1338.3" cy="774.6" r="12.6" fill="#fff" stroke="#8a8a8a" stroke-width="1.8"/>
<rect x="1335" y="767.2" width="3" height="3" fill="#8c8c8c"/>
<rect x="1339" y="767.2" width="3" height="3" fill="#8c8c8c"/>
<rect x="1331" y="771.2" width="3" height="3" fill="#8c8c8c"/>
<rect x="1335" y="771.2" width="3" height="3" fill="#c9c9c9"/>
<rect x="1339" y="771.2" width="3" height="3" fill="#c9c9c9"/>
<rect x="1343" y="771.2" width="3" height="3" fill="#8c8c8c"/>
<rect x="1331" y="775.2" width="3" height="3" fill="#8c8c8c"/>
<rect x="1335" y="775.2" width="3" height="3" fill="#c9c9c9"/>
<rect x="1339" y="775.2" width="3" height="3" fill="#c9c9c9"/>
<rect x="1343" y="775.2" width="3" height="3" fill="#8c8c8c"/>
<rect x="1335" y="779.2" width="3" height="3" fill="#8c8c8c"/>
<rect x="1339" y="779.2" width="3" height="3" fill="#8c8c8c"/>
<circle cx="1338.3" cy="882.6" r="12.6" fill="#fff" stroke="#8a8a8a" stroke-width="1.8"/>
<rect x="1335" y="875.2" width="3" height="3" fill="#8c8c8c"/>
<rect x="1339" y="875.2" width="3" height="3" fill="#8c8c8c"/>
<rect x="1331" y="879.2" width="3" height="3" fill="#8c8c8c"/>
<rect x="1335" y="879.2" width="3" height="3" fill="#c9c9c9"/>
<rect x="1339" y="879.2" width="3" height="3" fill="#c9c9c9"/>
<rect x="1343" y="879.2" width="3" height="3" fill="#8c8c8c"/>
<rect x="1331" y="883.2" width="3" height="3" fill="#8c8c8c"/>
<rect x="1335" y="883.2" width="3" height="3" fill="#c9c9c9"/>
<rect x="1339" y="883.2" width="3" height="3" fill="#c9c9c9"/>
<rect x="1343" y="883.2" width="3" height="3" fill="#8c8c8c"/>
<rect x="1335" y="887.2" width="3" height="3" fill="#8c8c8c"/>
<rect x="1339" y="887.2" width="3" height="3" fill="#8c8c8c"/>
<text x="1493" y="165.5" font-family="Liberation Sans, sans-serif" font-size="23" font-weight="bold" fill="#e8e8e8" letter-spacing="-0.3">Layer properties</text>
<rect x="1497.5" y="197.5" width="47" height="41" rx="3" fill="url(#chk2)" stroke="#8c8c8c" stroke-width="2"/>
<g clip-path="url(#sth)"><g transform="translate(1500.5,203) scale(0.275) translate(-605,-621.7)"><path d="M622.5,632.9 C630.3,632.3 649.6,636.7 661.7,636.5 C673.8,636.3 685.1,633.5 695.0,631.8 C704.9,630.1 715.1,626.9 720.8,626.2 C726.5,625.6 726.5,625.6 729.2,627.9 C731.8,630.2 734.2,635.3 736.7,640.0 C739.2,644.7 743.3,652.3 744.2,656.2 C745.1,660.2 746.1,661.4 742.1,663.8 C738.1,666.1 730.6,668.5 720.0,670.2 C709.4,671.8 690.8,673.0 678.3,673.5 C665.8,674.0 655.4,674.2 645.0,673.3 C634.6,672.5 621.9,670.7 615.8,668.3 C609.7,666.0 609.3,662.2 608.3,659.2 C607.4,656.1 608.9,653.2 610.0,650.0 C611.1,646.8 612.9,642.8 615.0,640.0 C617.1,637.2 614.7,633.5 622.5,632.9 Z" fill="#fff" stroke="#000" stroke-width="9.36" stroke-linecap="round" stroke-linejoin="round" /><path d="M610.8,654.2 C612.8,654.0 618.6,653.5 622.5,652.9 C626.4,652.4 631.0,650.9 634.2,650.8 C637.4,650.8 639.2,652.6 641.7,652.5 C644.2,652.4 646.9,650.0 649.2,650.0 C651.4,650.0 653.1,651.6 655.0,652.5 C656.9,653.4 658.6,655.3 660.8,655.4 C663.1,655.5 666.0,652.9 668.3,652.9 C670.7,652.9 672.8,654.7 675.0,655.4 C677.2,656.1 679.4,657.2 681.7,657.1 C683.9,657.0 686.2,655.8 688.3,655.0 C690.4,654.2 692.2,652.2 694.2,652.1 C696.1,651.9 698.1,653.5 700.0,654.2 C701.9,654.8 703.8,655.8 705.8,655.8 C707.9,655.8 710.3,655.1 712.5,654.2 C714.7,653.2 717.1,650.4 719.2,650.0 C721.2,649.6 722.9,651.2 725.0,651.7 C727.1,652.1 729.2,652.6 731.7,652.5 C734.2,652.4 738.6,651.5 740.0,651.2" fill="none" stroke="#000" stroke-width="8.10" stroke-linecap="round" stroke-linejoin="round" /><path d="M634.6,650.4 L635.8,653.8" fill="none" stroke="#000" stroke-width="6.48" stroke-linecap="round" stroke-linejoin="round" /><path d="M649.3,650.8 L650.7,657.5" fill="none" stroke="#000" stroke-width="6.48" stroke-linecap="round" stroke-linejoin="round" /><path d="M673.8,655.4 L674.8,660.0" fill="none" stroke="#000" stroke-width="6.48" stroke-linecap="round" stroke-linejoin="round" /><path d="M696.8,652.9 L698.3,658.8" fill="none" stroke="#000" stroke-width="6.48" stroke-linecap="round" stroke-linejoin="round" /><path d="M721.8,650.8 L724.0,657.1" fill="none" stroke="#000" stroke-width="6.48" stroke-linecap="round" stroke-linejoin="round" /><path d="M609.2,628.8 C609.5,628.3 610.4,626.9 611.2,626.2 C612.1,625.6 613.7,624.9 614.2,624.6" fill="none" stroke="#000" stroke-width="3.96" stroke-linecap="round" stroke-linejoin="round" /><path d="M738.3,621.2 C738.9,621.7 740.8,623.1 741.7,624.2 C742.6,625.3 743.4,627.3 743.8,627.9" fill="none" stroke="#000" stroke-width="3.96" stroke-linecap="round" stroke-linejoin="round" /><path d="M659.0,698.5 C661.2,698.9 667.8,700.9 672.0,701.0 C676.2,701.1 682.4,699.3 684.5,699.0" fill="none" stroke="#000" stroke-width="3.24" stroke-linecap="round" stroke-linejoin="round" /></g></g>
<rect x="1500" y="241.3" width="42" height="1.6" fill="#8c8c8c"/><rect x="1503" y="244" width="36" height="1.4" fill="#8c8c8c"/>
<text x="1557.5" y="226.6" font-family="Liberation Sans, sans-serif" font-size="22" fill="#e0e0e0" letter-spacing="-0.2">Layer group</text>
<rect x="1557" y="243" width="268.5" height="2" fill="#505050"/>
<text x="1493.5" y="313" font-family="Liberation Sans, sans-serif" font-size="22" fill="#e0e0e0" letter-spacing="0.1">Blend mode</text>
<rect x="1494" y="335.3" width="334" height="57.4" fill="#2c2c2c" stroke="#4a4a4a" stroke-width="2"/>
<text x="1517" y="370" font-family="Liberation Sans, sans-serif" font-size="20.5" fill="#e8e8e8" letter-spacing="-0.2">Pass through</text>
<path d="M1786,359.5 L1795,368.5 L1804,359.5" fill="none" stroke="#d0d0d0" stroke-width="2.4"/>
<text x="1493.5" y="455.3" font-family="Liberation Sans, sans-serif" font-size="22" fill="#e0e0e0">Layer opacity</text>
<text x="1826.5" y="463" font-family="Liberation Sans, sans-serif" font-size="20" fill="#d8d8d8" text-anchor="end" letter-spacing="-0.4">100</text>
<rect x="1494" y="497.8" width="307" height="3.6" rx="1.8" fill="#bdbdbd"/>
<circle cx="1814.5" cy="499" r="13.2" fill="#232323" stroke="#cfcfcf" stroke-width="2.6"/>
<circle cx="1647.3" cy="798.2" r="40" fill="#6b6b6b" stroke="#f0f0f0" stroke-width="2"/>
<rect x="1853.5" y="132" width="60" height="60" rx="5" fill="#464646"/>
<rect x="1853.5" y="198" width="60" height="60" rx="5" fill="#464646"/>
<path d="M1883.5,147.5 L1897,157.5 L1883.5,167.5 L1870,157.5 Z" fill="#b8b8b8"/>
<path d="M1872.5,163.5 L1870,165.5 L1883.5,175.5 L1897,165.5 L1894.5,163.5 L1883.5,171.5 Z" fill="#b8b8b8"/>
<path d="M1871,218.8 H1896.5" stroke="#b8b8b8" stroke-width="2.2"/><circle cx="1876.8" cy="218.8" r="3.6" fill="#464646" stroke="#b8b8b8" stroke-width="2"/>
<path d="M1871,226.8 H1896.5" stroke="#b8b8b8" stroke-width="2.2"/><circle cx="1889.7" cy="226.8" r="3.6" fill="#464646" stroke="#b8b8b8" stroke-width="2"/>
<path d="M1871,234.9 H1896.5" stroke="#b8b8b8" stroke-width="2.2"/><circle cx="1883" cy="234.9" r="3.6" fill="#464646" stroke="#b8b8b8" stroke-width="2"/>
<path d="M1879,281 V306 M1888,281 V306 M1871,289.5 H1896 M1871,298.5 H1896" stroke="#6a6a6a" stroke-width="1.8"/>
<rect x="1871" y="280.5" width="25.5" height="25.8" fill="none" stroke="#b8b8b8" stroke-width="2.4"/>
<path d="M1874,347.5 H1893.5 a3,3 0 0 1 3,3 V363.5 a3,3 0 0 1 -3,3 H1881.5 L1876.5,373 V366.5 H1874 a3,3 0 0 1 -3,-3 V350.5 a3,3 0 0 1 3,-3 Z" fill="#b8b8b8"/>
<rect x="1871.8" y="437.8" width="23.6" height="23" fill="none" stroke="#b8b8b8" stroke-width="2.4"/>
<path d="M1883.6,443 V455.6 M1877.3,449.3 H1889.9" stroke="#b8b8b8" stroke-width="2.6"/>
<path d="M1898,473 H1907 V464.5 Z" fill="#b8b8b8"/>
<path d="M1869.7,515.4 C1874,507 1881,505.7 1883.5,505.7 C1886,505.7 1893,507 1897.2,515.4 C1893,523.8 1886,525.1 1883.5,525.1 C1881,525.1 1874,523.8 1869.7,515.4 Z" fill="#b8b8b8"/>
<circle cx="1883.4" cy="515.4" r="7.6" fill="#2f2f2f"/><circle cx="1883.4" cy="515.4" r="4.8" fill="#b8b8b8"/><circle cx="1885.8" cy="513.2" r="2.1" fill="#2f2f2f"/>
<path d="M1873.2,576.5 V570.8 H1894.1 V591.8 H1885" fill="none" stroke="#5e5e5e" stroke-width="2.2"/>
<path d="M1885,579 H1877.8 V589" fill="none" stroke="#5e5e5e" stroke-width="2.2"/>
<path d="M1871.2,587.7 H1884 L1877.6,594.3 Z" fill="#5e5e5e"/>
<circle cx="1883.2" cy="642.5" r="7.7" fill="none" stroke="#b8b8b8" stroke-width="2"/>
<circle cx="1877.3" cy="652.3" r="7.7" fill="none" stroke="#b8b8b8" stroke-width="2"/>
<circle cx="1889.3" cy="652.3" r="7.7" fill="none" stroke="#b8b8b8" stroke-width="2"/>
<circle cx="1872.3" cy="713.5" r="3.4" fill="#b8b8b8"/>
<circle cx="1883.3" cy="713.5" r="3.4" fill="#b8b8b8"/>
<circle cx="1894.3" cy="713.5" r="3.4" fill="#b8b8b8"/>
<circle cx="1889.5" cy="928.5" r="6.5" fill="none" stroke="#b8b8b8" stroke-width="2.8"/>
<path d="M1881,930.5 a5,5 0 1 0 1,9" fill="none" stroke="#b8b8b8" stroke-width="2.8"/>
<path d="M1874.5,940.5 a3.5,3.5 0 1 0 4.5,4.5" fill="none" stroke="#b8b8b8" stroke-width="2.6"/>
<circle cx="1892" cy="943" r="8" fill="#b8b8b8"/><path d="M1889,938.5 L1896,943 L1889,947.5 Z" fill="#2f2f2f"/>
<path d="M1868.5,1010 L1892,986.5 L1899.5,994 L1876,1017.5 Z" fill="none" stroke="#b8b8b8" stroke-width="2.8"/>
<path d="M1871.5,1004.6 l2.8,2.8" stroke="#b8b8b8" stroke-width="1.5"/>
<path d="M1874.7,1001.5 l1.8,1.8" stroke="#b8b8b8" stroke-width="1.5"/>
<path d="M1877.9,998.3 l2.8,2.8" stroke="#b8b8b8" stroke-width="1.5"/>
<path d="M1881.1,995.2 l1.8,1.8" stroke="#b8b8b8" stroke-width="1.5"/>
<path d="M1884.3,992.0 l2.8,2.8" stroke="#b8b8b8" stroke-width="1.5"/>
<path d="M1887.5,988.9 l1.8,1.8" stroke="#b8b8b8" stroke-width="1.5"/>
<path d="M1897,1024 H1907 V1015.5 Z" fill="#b8b8b8"/>
<rect x="870" y="1059" width="180" height="4.5" rx="2.2" fill="#aaa49f"/>
<rect x="1682.5" y="1050.5" width="8.5" height="15" rx="4.25" fill="none" stroke="#e6a866" stroke-width="1.8"/>
<path d="M1679,1061 a7.8,7.8 0 0 0 15.6,0 M1686.8,1069 V1073.5" fill="none" stroke="#e6a866" stroke-width="1.8"/>
<path d="M1723.5,1059 a16,16 0 0 1 23,0 M1727,1062.5 a11,11 0 0 1 16,0 M1730.5,1066 a6,6 0 0 1 9,0" fill="none" stroke="#fff" stroke-width="1.8"/><circle cx="1735" cy="1068.5" r="1.8" fill="#fff"/>
<path d="M1760,1057 H1764 L1769.5,1052.5 V1070.5 L1764,1066 H1760 Z" fill="none" stroke="#fff" stroke-width="1.6" stroke-linejoin="round"/>
<path d="M1773,1058 a5,5 0 0 1 0,7 M1776.5,1055 a9,9 0 0 1 0,13" fill="none" stroke="#fff" stroke-width="1.6"/><path d="M1780,1053 a12.5,12.5 0 0 1 0,17" fill="none" stroke="#8a6a62" stroke-width="1.4"/>
<rect x="1796" y="1055.5" width="20" height="13" rx="2.5" fill="none" stroke="#fff" stroke-width="1.6"/><rect x="1798.5" y="1058" width="5" height="8" fill="#fff"/><path d="M1817.5,1059.5 h1.5 a0.7,0.7 0 0 1 .7,.7 v3.6 a.7,.7 0 0 1 -.7,.7 h-1.5z" fill="#fff"/>
<text x="1845" y="1067.8" font-family="Liberation Sans, sans-serif" font-size="18" fill="#fff" letter-spacing="-0.4">2:41 PM</text></svg>
<!--/UIR-->
<!--UI-->
<svg class="abs" style="left:0;top:0" width="1920" height="1080" viewBox="0 0 1920 1080"><path d="M1739,23.5 H1754" stroke="#fff" stroke-width="1.3"/>
<rect x="1808.6" y="19.6" width="10.8" height="10.9" rx="1.6" fill="none" stroke="#fff" stroke-width="1.3"/><path d="M1811,16.9 H1819.4 a3.1,3.1 0 0 1 3.1,3.1 V27.6" fill="none" stroke="#fff" stroke-width="1.3"/>
<path d="M1877.5,16.5 L1891.5,30.5 M1891.5,16.5 L1877.5,30.5" stroke="#fff" stroke-width="1.4"/>
<path d="M39.5,68 L29.5,77 L39.5,86" fill="none" stroke="#b8b8b8" stroke-width="2.2"/>
<text x="698" y="89" font-family="Liberation Sans, sans-serif" font-size="25" fill="#e6e6e6" letter-spacing="0.1">Untitled - April 10, 2024 21.19.56*</text>
<path d="M1103.5,73.5 L1111.5,81.5 L1119.5,73.5" fill="none" stroke="#b8b8b8" stroke-width="2.2"/>
<rect x="1142" y="59" width="81" height="37" rx="4" fill="#494949"/>
<text x="1182.5" y="85" font-family="Liberation Sans, sans-serif" font-size="19" fill="#e6e6e6" text-anchor="middle" letter-spacing="-0.4">44%</text>
<path d="M1447,75 H1459 a7.5,7.5 0 0 1 0,15 H1451" fill="none" stroke="#b8b8b8" stroke-width="3"/><path d="M1439.5,75 L1449,67.5 V82.5 Z" fill="#b8b8b8"/>
<path d="M1531,75 H1519 a7.5,7.5 0 0 0 0,15 H1527" fill="none" stroke="#b8b8b8" stroke-width="3"/><path d="M1538.5,75 L1529,67.5 V82.5 Z" fill="#b8b8b8"/>
<circle cx="1595.5" cy="78.5" r="12.5" fill="none" stroke="#b8b8b8" stroke-width="2.4"/>
<text x="1595.5" y="85" font-family="Liberation Sans, sans-serif" font-size="17" font-weight="bold" fill="#b8b8b8" text-anchor="middle">?</text>
<circle cx="1667" cy="78.4" r="13.6" fill="#b8b8b8"/>
<ellipse cx="1666.7" cy="75" rx="5" ry="6.8" fill="#323232"/>
<path d="M1658.5,87 C1661,84.5 1664,84 1667,84 C1671,84 1674,85 1676,87 L1674,90 C1671,91.5 1663,91.5 1660,89.5 Z" fill="#323232"/>
<path d="M1670,86 h4 v-5 h8 v5 h5 v8 h-5 v5 h-8 v-5 h-4 z" fill="#323232"/>
<path d="M1672.7,89 H1685.2 M1679,82.5 V95.5" stroke="#b8b8b8" stroke-width="2.4"/>
<path d="M1730,71 V90.5 H1753 V71 H1746 M1737,71 H1730" fill="none" stroke="#b8b8b8" stroke-width="2.6"/>
<path d="M1741.5,82 V66" stroke="#b8b8b8" stroke-width="2.6"/><path d="M1735.5,69 L1741.5,63 L1747.5,69 Z" fill="#b8b8b8"/>
<path d="M1828.2,75.4 L1828.2,81.6 L1823.9,82.0 L1823.6,82.6 L1826.3,86.0 L1822.0,90.3 L1818.6,87.6 L1818.0,87.9 L1817.6,92.2 L1811.4,92.2 L1811.0,87.9 L1810.4,87.6 L1807.0,90.3 L1802.7,86.0 L1805.4,82.6 L1805.1,82.0 L1800.8,81.6 L1800.8,75.4 L1805.1,75.0 L1805.4,74.4 L1802.7,71.0 L1807.0,66.7 L1810.4,69.4 L1811.0,69.1 L1811.4,64.8 L1817.6,64.8 L1818.0,69.1 L1818.6,69.4 L1822.0,66.7 L1826.3,71.0 L1823.6,74.4 L1823.9,75.0Z M1819.0,78.5 a4.5,4.5 0 1 0 -9,0 a4.5,4.5 0 1 0 9,0z" fill="#b8b8b8" fill-rule="evenodd"/>
<path d="M1885,77.5 L1894,68.5 M1886,79.5 L1877,88.5" stroke="#b8b8b8" stroke-width="2.8"/>
<path d="M1899.5,63 L1889,63 L1899.5,73.5 Z M1872,93 L1882.5,93 L1872,82.5 Z" fill="#b8b8b8"/></svg>
<!--/UI-->
</body></html>
